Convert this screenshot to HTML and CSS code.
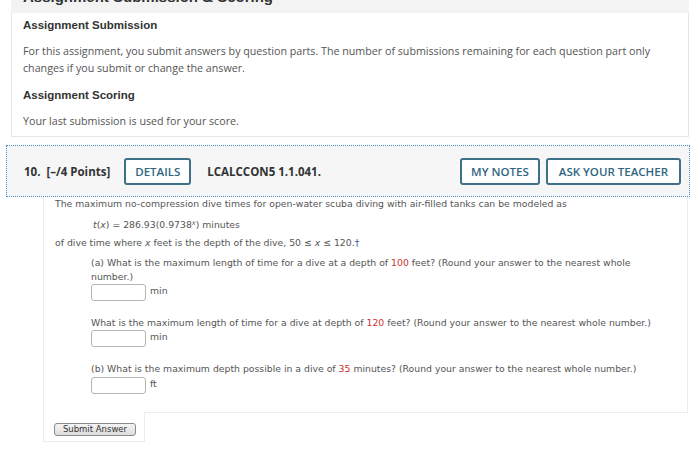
FILE: index.html
```html
<!DOCTYPE html>
<html>
<head>
<meta charset="utf-8">
<link rel="stylesheet" href="styles.css">
</head>
<body>
<div class="info">
  <div class="info-head">Assignment Submission &amp; Scoring</div>
  <div class="info-body">
    <h3 class="info-title">Assignment Submission</h3>
    <p class="info-text">For this assignment, you submit answers by question parts. The number of submissions remaining for each question part only changes if you submit or change the answer.</p>
    <h3 class="info-title">Assignment Scoring</h3>
    <p class="info-text info-last">Your last submission is used for your score.</p>
  </div>
</div>

<div class="question">
  <div class="q-head">
    <span class="q-num">10.&nbsp; [–/4 Points]</span>
    <span class="q-btn">DETAILS</span>
    <span class="q-code">LCALCCON5 1.1.041.</span>
    <span class="q-spacer"></span>
    <span class="q-btn">MY NOTES</span>
    <span class="q-btn q-btn-wide">ASK YOUR TEACHER</span>
  </div>
  <div class="q-body">
    <p class="q-line">The maximum no-compression dive times for open-water scuba diving with air-filled tanks can be modeled as</p>
    <p class="q-formula"><i>t</i>(<i>x</i>) = 286.93(0.9738<sup class="sup"><i>x</i></sup>) minutes</p>
    <p class="q-line q-after">of dive time where <i>x</i> feet is the depth of the dive, 50 ≤ <i>x</i> ≤ 120.<span class="dagger">†</span></p>
    <div class="part part-a">
      <p class="q-line">(a) What is the maximum length of time for a dive at a depth of <span class="red">100</span> feet? (Round your answer to the nearest whole number.)</p>
      <div class="answer"><span class="box"></span><span class="unit">min</span></div>
    </div>
    <div class="part">
      <p class="q-line">What is the maximum length of time for a dive at depth of <span class="red">120</span> feet? (Round your answer to the nearest whole number.)</p>
      <div class="answer"><span class="box"></span><span class="unit">min</span></div>
    </div>
    <div class="part">
      <p class="q-line">(b) What is the maximum depth possible in a dive of <span class="red">35</span> minutes? (Round your answer to the nearest whole number.)</p>
      <div class="answer answer-b"><span class="box"></span><span class="unit">ft</span></div>
    </div>
  </div>
  <div class="q-foot">
    <div class="submit-cell"><span class="submit-btn">Submit Answer</span></div>
    <div class="foot-rest"></div>
  </div>
</div>
</body>
</html>
```

FILE: styles.css
```css
html, body {
  margin: 0;
  padding: 0;
  background: #ffffff;
}

body {
  width: 700px;
  height: 451px;
  overflow: hidden;
}

.info {
  margin: -12px 11px 0 11px;
}

.info-head {
  height: 25px;
  line-height: 17px;
  background: #f3f3f3;
  padding-left: 12px;
  box-sizing: border-box;
  font-family: "Liberation Sans", Arial, sans-serif;
  font-weight: bold;
  font-size: 15px;
  color: #333333;
}

.info-body {
  border: 1px solid #e6e6e6;
  border-top: none;
  padding: 4px 12px 6px 11px;
}

.info-title {
  margin: 0;
  font-family: "Liberation Sans", Arial, sans-serif;
  font-weight: bold;
  font-size: 11.5px;
  line-height: 16px;
  color: #333333;
}

.info-text {
  margin: 10px 0;
  font-family: "Open Sans", sans-serif;
  font-size: 10.7px;
  line-height: 17px;
  color: #555555;
}

.info-last {
  margin-bottom: 0;
}

.question {
  margin: 8px 10px 0 6px;
}

.q-head {
  display: flex;
  align-items: center;
  height: 27px;
  padding: 12px 8px 11px 17px;
  background: #f6f6f6;
  border: 1px dotted #4f8fc2;
  font-family: "Open Sans", sans-serif;
  color: #333333;
}

.q-num {
  font-weight: bold;
  font-size: 11.5px;
  margin-right: 14px;
}

.q-code {
  font-weight: bold;
  font-size: 11.5px;
  margin-left: 16px;
}

.q-spacer {
  flex: 1;
}

.q-btn {
  box-sizing: border-box;
  height: 27px;
  line-height: 23px;
  padding: 0 9px;
  border: 2px solid #3e7088;
  border-radius: 3px;
  background: #ffffff;
  color: #2f6580;
  font-weight: 600;
  font-size: 11.5px;
}

.q-btn + .q-btn {
  margin-left: 6px;
}

.q-btn-wide {
  padding: 0 11px;
}

.q-body {
  margin-left: 37px;
  margin-right: 2px;
  border-left: 1px solid #ececec;
  border-right: 1px solid #ececec;
  padding: 0 0 17px 11px;
  font-family: "DejaVu Sans", Verdana, sans-serif;
  font-size: 9.3px;
  color: #555555;
}

.q-line {
  margin: 0;
  line-height: 14px;
}

.q-formula {
  margin: 7px 0 0 38px;
  line-height: 14px;
}

.q-after {
  margin-top: 4px;
}

.sup {
  font-size: 6.5px;
  vertical-align: 3px;
  line-height: 0;
}

.dagger {
  color: #3a55a0;
}

.red {
  color: #d0312d;
}

.part {
  margin: 14px 0 0 36px;
  width: 572px;
}

.part-a {
  margin-top: 6px;
}

.answer {
  display: flex;
  align-items: flex-start;
  height: 18px;
}

.answer-b {
  margin-top: 1px;
}

.box {
  box-sizing: border-box;
  width: 55px;
  height: 17px;
  border: 1px solid #b5b5b5;
  border-radius: 3px;
  background: #ffffff;
}

.unit {
  margin-left: 4px;
  line-height: 14px;
}

.q-foot {
  display: flex;
  margin-left: 37px;
  margin-right: 2px;
}

.submit-cell {
  width: 102px;
  height: 30px;
  border-left: 1px solid #ececec;
  border-right: 1px solid #ececec;
  border-bottom: 1px solid #ececec;
  padding: 11px 0 0 10px;
  box-sizing: border-box;
}

.foot-rest {
  flex: 1;
  border-top: 1px solid #ececec;
}

.submit-btn {
  display: block;
  box-sizing: border-box;
  width: 82px;
  height: 13px;
  line-height: 11px;
  text-align: center;
  border: 1px solid #8c8c8c;
  border-radius: 3px;
  background: linear-gradient(#f4f4f4, #dcdcdc);
  font-family: "DejaVu Sans", Verdana, sans-serif;
  font-size: 8.5px;
  color: #333333;
}
```
